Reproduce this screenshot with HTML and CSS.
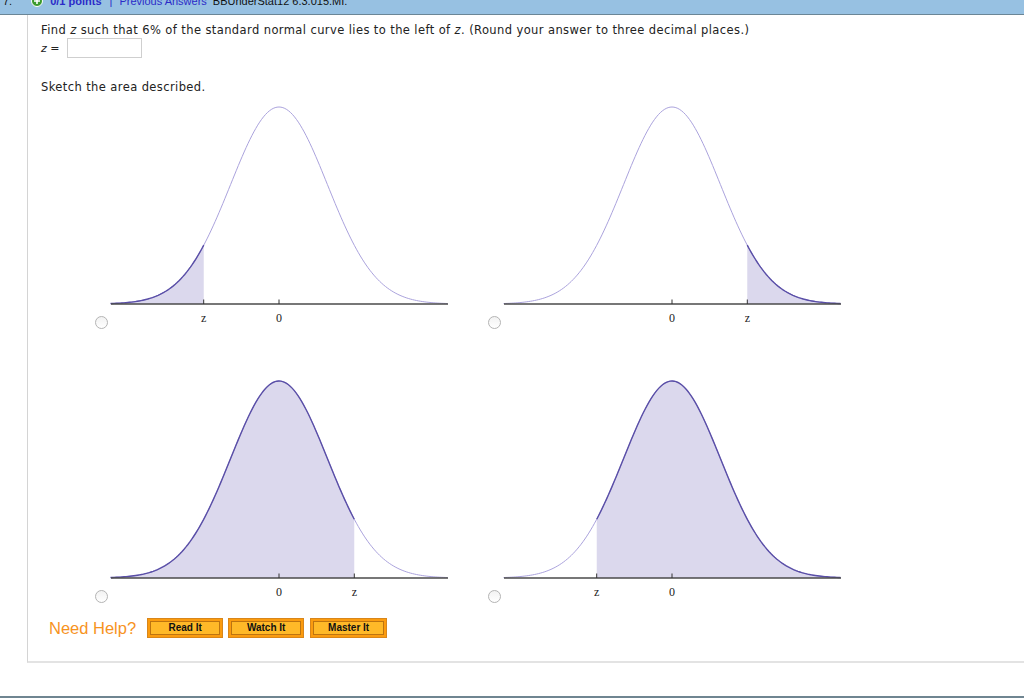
FILE: index.html
```html
<!DOCTYPE html>
<html>
<head>
<meta charset="utf-8">
<link rel="stylesheet" href="styles.css">
</head>
<body>
<div class="topbar">
  <div class="topbar-row">
    <span class="qnum">7.</span>
    <svg class="status-icon" width="12" height="12" viewBox="0 0 12 12"><circle cx="6" cy="6" r="5.5" fill="#3b9a2c" stroke="#fff" stroke-width="1"/><path d="M6 3v6M3 6h6" stroke="#fff" stroke-width="1.6"/></svg>
    <span class="points">0/1 points</span>
    <span class="sep">|</span>
    <span class="prev">Previous Answers</span>
    <span class="ref">BBUnderStat12 6.3.015.MI.</span>
  </div>
</div>
<div class="content">
  <p class="question">Find <i>z</i> such that 6% of the standard normal curve lies to the left of <i>z</i>. (Round your answer to three decimal places.)</p>
  <div class="answer-row"><span class="zlabel"><i>z</i> =</span><span class="answer-box"></span></div>
  <p class="sketch">Sketch the area described.</p>
  <div class="options">
    <div class="option">
      <span class="radio"></span>
      <svg class="bell" data-a="-3.48" data-b="-1.555" width="340" height="230" viewBox="0 0 340 230">
        <path class="fill"/><path class="line-light"/><path class="line-dark"/>
        <line class="axis" x1="2" y1="204" x2="339" y2="204"/>
        <line class="tick" x1="94.7" y1="199.5" x2="94.7" y2="204"/>
        <line class="tick" x1="170" y1="199.5" x2="170" y2="204"/>
        <text class="lbl" x="94.7" y="222">z</text>
        <text class="lbl" x="170" y="222">0</text>
      </svg>
    </div>
    <div class="option">
      <span class="radio"></span>
      <svg class="bell" data-a="1.555" data-b="3.48" width="340" height="230" viewBox="0 0 340 230">
        <path class="fill"/><path class="line-light"/><path class="line-dark"/>
        <line class="axis" x1="2" y1="204" x2="339" y2="204"/>
        <line class="tick" x1="170" y1="199.5" x2="170" y2="204"/>
        <line class="tick" x1="245.3" y1="199.5" x2="245.3" y2="204"/>
        <text class="lbl" x="170" y="222">0</text>
        <text class="lbl" x="245.3" y="222">z</text>
      </svg>
    </div>
    <div class="option">
      <span class="radio"></span>
      <svg class="bell" data-a="-3.48" data-b="1.555" width="340" height="230" viewBox="0 0 340 230">
        <path class="fill"/><path class="line-light"/><path class="line-dark"/>
        <line class="axis" x1="2" y1="204" x2="339" y2="204"/>
        <line class="tick" x1="170" y1="199.5" x2="170" y2="204"/>
        <line class="tick" x1="245.3" y1="199.5" x2="245.3" y2="204"/>
        <text class="lbl" x="170" y="222">0</text>
        <text class="lbl" x="245.3" y="222">z</text>
      </svg>
    </div>
    <div class="option">
      <span class="radio"></span>
      <svg class="bell" data-a="-1.555" data-b="3.48" width="340" height="230" viewBox="0 0 340 230">
        <path class="fill"/><path class="line-light"/><path class="line-dark"/>
        <line class="axis" x1="2" y1="204" x2="339" y2="204"/>
        <line class="tick" x1="94.7" y1="199.5" x2="94.7" y2="204"/>
        <line class="tick" x1="170" y1="199.5" x2="170" y2="204"/>
        <text class="lbl" x="94.7" y="222">z</text>
        <text class="lbl" x="170" y="222">0</text>
      </svg>
    </div>
  </div>
  <div class="help-row">
    <span class="need-help">Need Help?</span>
    <span class="btn"><span class="btn-inner">Read It</span></span>
    <span class="btn"><span class="btn-inner">Watch It</span></span>
    <span class="btn wide"><span class="btn-inner">Master It</span></span>
  </div>
</div>
<div class="footer-line"></div>
<script src="script.js"></script>
</body>
</html>
```
FILE: styles.css
```css
html, body {
  margin: 0;
  padding: 0;
  background: #fff;
}
body {
  font-family: "DejaVu Sans", Verdana, sans-serif;
  color: #222;
  height: 698px;
  overflow: hidden;
}
.topbar {
  height: 14px;
  background: #97c1e2;
  border-bottom: 1px solid #6b8696;
  overflow: hidden;
  font-family: "Liberation Sans", Arial, sans-serif;
  font-size: 11px;
}
.topbar-row {
  display: flex;
  align-items: center;
  height: 12px;
  margin-top: -5px;
  white-space: nowrap;
}
.qnum { margin-left: 3px; color: #111; }
.status-icon { margin-left: 19px; flex: none; }
.points { margin-left: 7px; font-weight: bold; color: #2b2bc8; }
.sep { margin-left: 8px; color: #2b2bc8; }
.prev { margin-left: 7px; color: #2b2bc8; }
.ref { margin-left: 6px; color: #111; }

.content {
  margin-left: 27px;
  border-left: 1px solid #d4d4d4;
  border-bottom: 2px solid #e3e3e3;
  padding: 8px 0 23px 13px;
}
.question {
  margin: 0;
  font-size: 11.5px;
  letter-spacing: 0.4px;
  line-height: 14px;
}
.answer-row {
  display: flex;
  align-items: center;
  margin-top: 1px;
  height: 20px;
  font-size: 11px;
}
.zlabel { width: 26px; }
.answer-box {
  width: 73px;
  height: 18px;
  border: 1px solid #cfcfcf;
  background: #fff;
}
.sketch {
  margin: 22px 0 0 0;
  font-size: 11.5px;
  letter-spacing: 0.4px;
  line-height: 14px;
}
.options {
  display: grid;
  grid-template-columns: 393px 393px;
  row-gap: 44px;
  margin: 6px 0 0 54px;
}
.option {
  display: flex;
  align-items: flex-end;
}
.radio {
  flex: none;
  width: 11px;
  height: 11px;
  border: 1px solid #b4b4b4;
  border-radius: 50%;
  background: linear-gradient(#f2f2f2, #fff);
  margin: 0 1px 1px 0;
}
.bell { display: block; flex: none; }
.bell .fill { fill: #dbd8ed; stroke: none; }
.bell .line-light { fill: none; stroke: #aba3dd; stroke-width: 1; }
.bell .line-dark { fill: none; stroke: #5a4fa7; stroke-width: 1.4; }
.bell .axis { stroke: #4a4a4a; stroke-width: 1.6; }
.bell .tick { stroke: #333; stroke-width: 1; }
.bell .lbl {
  font-family: "Liberation Serif", "Times New Roman", serif;
  font-size: 12px;
  fill: #222;
  text-anchor: middle;
}
.help-row {
  display: flex;
  align-items: center;
  margin: 14px 0 0 8px;
  height: 20px;
}
.need-help {
  font-family: "Liberation Sans", Arial, sans-serif;
  font-size: 16.5px;
  color: #f7931e;
  margin-right: 11px;
}
.btn {
  display: block;
  width: 70px;
  height: 14px;
  padding: 2px;
  border: 1px solid #d9861a;
  background: #fb9b0e;
  margin-right: 5px;
}
.btn.wide { width: 71px; margin-left: 1px; }
.btn-inner {
  display: block;
  height: 12px;
  border: 1px solid #bd7410;
  background: #ffb928;
  font-family: "Liberation Sans", Arial, sans-serif;
  font-weight: bold;
  font-size: 10px;
  line-height: 12px;
  text-align: center;
  color: #111;
}
.footer-line {
  margin-top: 33px;
  height: 2px;
  background: #6f8591;
}
```
FILE: script.js
```js
(function () {
  var S = 48.4, CX = 170, AY = 204, H = 197;
  function y(z) { return AY - H * Math.exp(-z * z / 2); }
  function pts(a, b) {
    var n = Math.max(2, Math.ceil((b - a) / 0.04)), out = [];
    for (var i = 0; i <= n; i++) {
      var z = a + (b - a) * i / n;
      out.push((CX + z * S).toFixed(2) + ',' + y(z).toFixed(2));
    }
    return out;
  }
  var svgs = document.querySelectorAll('svg.bell');
  for (var k = 0; k < svgs.length; k++) {
    var svg = svgs[k];
    var a = parseFloat(svg.getAttribute('data-a'));
    var b = parseFloat(svg.getAttribute('data-b'));
    var full = pts(-3.48, 3.48);
    var part = pts(a, b);
    svg.querySelector('.line-light').setAttribute('d', 'M' + full.join(' L'));
    svg.querySelector('.line-dark').setAttribute('d', 'M' + part.join(' L'));
    svg.querySelector('.fill').setAttribute('d',
      'M' + (CX + a * S).toFixed(2) + ',' + AY + ' L' + part.join(' L') +
      ' L' + (CX + b * S).toFixed(2) + ',' + AY + ' Z');
  }
})();
```
